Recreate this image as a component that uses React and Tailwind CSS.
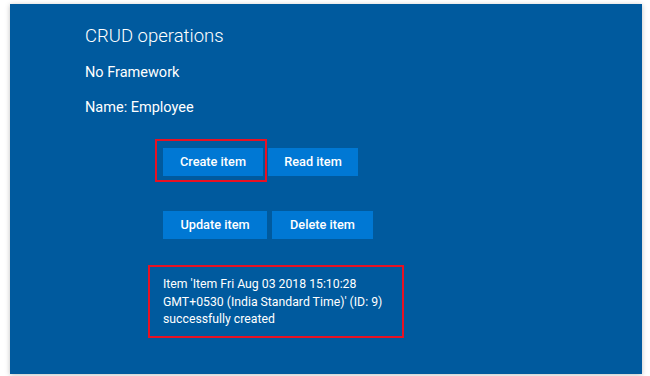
const FONT = { fontFamily: 'Roboto, "Open Sans", sans-serif' }

const ROWS = [
  [
    { key: 'create', label: 'Create item', width: 'w-[100px]', marked: true },
    { key: 'read', label: 'Read item', width: 'w-[90px]' },
  ],
  [
    { key: 'update', label: 'Update item', width: 'w-[104px]' },
    { key: 'delete', label: 'Delete item', width: 'w-[101px]' },
  ],
]

function ActionButton({ label, width, marked }) {
  return (
    <div className="relative">
      <button
        type="button"
        className={`flex h-[28px] ${width} items-center justify-center bg-[#0078d4] text-[12.75px] font-medium text-white`}
      >
        {label}
      </button>
      {marked && (
        <div className="pointer-events-none absolute -bottom-[6px] -left-[8px] -right-[4px] -top-[9px] border-2 border-[#e81123]" />
      )}
    </div>
  )
}

export default function App() {
  return (
    <div className="h-[376px] w-[650px] bg-white pl-[10px] pt-[4px]" style={FONT}>
      <div className="h-[370px] w-[632px] bg-[#005a9e] pl-[75px] pt-[18px] text-white shadow-[0_1px_5px_rgba(0,0,0,0.25)]">
        <h1 className="text-[18.5px] font-light leading-[28px]">CRUD operations</h1>
        <p className="mt-[13px] text-[14.5px] leading-[20px]">No Framework</p>
        <p className="mt-[15px] text-[14.5px] leading-[20px]">Name: Employee</p>

        <div className="ml-[78px] mt-[30px] flex flex-col gap-[35px]">
          {ROWS.map((row, i) => (
            <div key={i} className="flex gap-[5px]">
              {row.map((btn) => (
                <ActionButton key={btn.key} {...btn} />
              ))}
            </div>
          ))}
        </div>

        <div className="ml-[63px] mt-[26px] w-[256px] border-2 border-[#e81123] px-[13px] pb-[7px] pt-[9px] text-[12.25px] leading-[17.5px]">
          <span className="block whitespace-nowrap">Item 'Item Fri Aug 03 2018 15:10:28</span>
          <span className="block whitespace-nowrap">GMT+0530 (India Standard Time)' (ID: 9)</span>
          <span className="block whitespace-nowrap">successfully created</span>
        </div>
      </div>
    </div>
  )
}
